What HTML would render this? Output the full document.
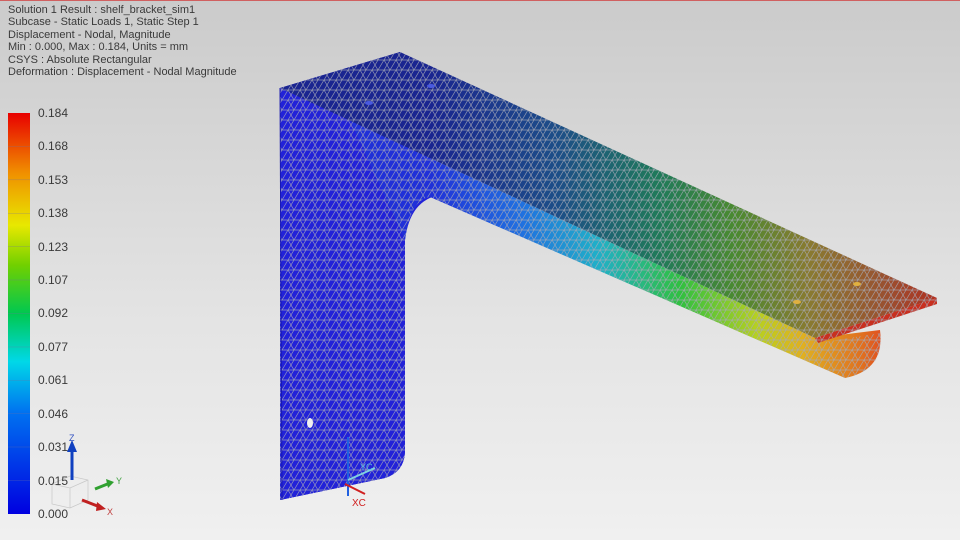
<!DOCTYPE html>
<html><head><meta charset="utf-8"><style>
html,body{margin:0;padding:0}
body{width:960px;height:540px;overflow:hidden;position:relative;background:linear-gradient(#cbcbcb,#e4e4e4 60%,#f0f0f0);font-family:"Liberation Sans",sans-serif;color:#3a3a3a}
.hdr{position:absolute;left:8px;top:4px;font-size:11px;line-height:12.4px}
.lab{position:absolute;left:38px;font-size:12px;color:#3a3a3a}
</style></head><body>
<div style="position:absolute;left:0;top:0;width:960px;height:1px;background:#d06060"></div>
<div class="hdr">Solution 1 Result : shelf_bracket_sim1<br>Subcase - Static Loads 1, Static Step 1<br>Displacement - Nodal, Magnitude<br>Min : 0.000, Max : 0.184, Units = mm<br>CSYS : Absolute Rectangular<br>Deformation : Displacement - Nodal Magnitude</div>
<svg width="960" height="540" style="position:absolute;left:0;top:0">
<defs>
<linearGradient id="leg" x1="0" y1="1" x2="0" y2="0">
<stop offset="0" stop-color="#0000e0"/><stop offset="0.25" stop-color="#0070f0"/><stop offset="0.38" stop-color="#00d8e8"/><stop offset="0.5" stop-color="#00c850"/><stop offset="0.62" stop-color="#70d000"/><stop offset="0.72" stop-color="#e8e800"/><stop offset="0.85" stop-color="#f09000"/><stop offset="1" stop-color="#e80000"/>
</linearGradient>
<linearGradient id="web" gradientUnits="userSpaceOnUse" x1="430" y1="0" x2="885" y2="0">
<stop offset="0" stop-color="#2030d8"/><stop offset="0.2" stop-color="#2070e0"/><stop offset="0.37" stop-color="#20b0c8"/><stop offset="0.55" stop-color="#30c040"/><stop offset="0.72" stop-color="#b8d020"/><stop offset="0.82" stop-color="#e0b020"/><stop offset="0.95" stop-color="#e07020"/><stop offset="1" stop-color="#e04a20"/>
</linearGradient>
<linearGradient id="top" gradientUnits="userSpaceOnUse" x1="430" y1="0" x2="937" y2="0">
<stop offset="0" stop-color="#1a2590"/><stop offset="0.25" stop-color="#1d4e88"/><stop offset="0.45" stop-color="#1f7a5a"/><stop offset="0.6" stop-color="#4a8a30"/><stop offset="0.75" stop-color="#8a7a30"/><stop offset="0.9" stop-color="#9a5030"/><stop offset="1" stop-color="#b03020"/>
</linearGradient>
<pattern id="mesh" width="12" height="10" patternUnits="userSpaceOnUse">
<path d="M0 0H12M0 10H12M0 0L6 10L12 0M0 10L6 0" stroke="#a8aab8" stroke-width="0.7" fill="none" opacity="0.85"/>
</pattern>
</defs>
<rect x="8" y="113" width="22" height="401" fill="url(#leg)"/>
<g stroke="#7070a0" stroke-width="0.5" opacity="0.5">
<path d="M8 146.4H30M8 179.8H30M8 213.3H30M8 246.7H30M8 280H30M8 313.5H30M8 347H30M8 380.3H30M8 413.7H30M8 447H30M8 480.6H30"/></g>
<path d="M280 88 L400 52 L440 195 Q410 200 405 240 L405 452 Q404 472 385 478 L280 500 Z" fill="#2222d8"/>
<path d="M280 88 L815 338 L880 330 Q885 370 845 378 L430 197 Q410 200 405 240 Z" fill="url(#web)"/>
<path d="M280 88 L350 120 L405 240 L405 452 Q404 472 385 478 L280 500 Z" fill="#2222d8"/>
<path d="M280 88 L400 52 L937 298 L815 338 Z" fill="url(#top)"/>
<path d="M815 338 L937 298 L937 304 L818 343 Z" fill="#c83020"/>
<path d="M280 88 L400 52 L937 298 L937 304 L818 343 L880 333 Q885 370 845 378 L430 197 Q410 200 405 240 L405 452 Q404 472 385 478 L280 500 Z" fill="url(#mesh)"/>
<path d="M280 88 L282 500" stroke="#1818b0" stroke-width="1"/>
<ellipse cx="431" cy="86" rx="4" ry="2" fill="#4a5ae0"/><ellipse cx="369" cy="103" rx="4" ry="2" fill="#4a5ae0"/>
<ellipse cx="857" cy="284" rx="4" ry="2" fill="#e0b040"/><ellipse cx="797" cy="302" rx="4" ry="2" fill="#e0b040"/>
<ellipse cx="310" cy="423" rx="3" ry="5" fill="#f0f0f0"/>
<path d="M348 496 V437" stroke="#2060e0" stroke-width="2"/>
<path d="M348 480 L375 468" stroke="#80d0e0" stroke-width="2"/>
<path d="M345 484 L365 494" stroke="#d02020" stroke-width="2"/>
<text x="352" y="506" font-size="10" fill="#d02020" font-family="Liberation Sans">XC</text>
<text x="360" y="470" font-size="9" fill="#60c0e0" font-family="Liberation Sans">YC</text>
<g stroke="#c8c8c8" stroke-width="0.7" fill="none">
<path d="M52 484 L70 476 L88 480 L88 500 L70 508 L52 504 Z M52 484 L70 488 L88 480 M70 488 V508"/></g>
<path d="M72 480 V448" stroke="#1040c0" stroke-width="3"/><path d="M67 452 L72 440 L77 452 Z" fill="#1040c0"/>
<path d="M95 489 L110 483" stroke="#30a030" stroke-width="3"/><path d="M106 479 L114 482 L108 488Z" fill="#30a030"/>
<path d="M82 500 L100 507" stroke="#c02020" stroke-width="3"/><path d="M97 502 L106 509 L96 511Z" fill="#c02020"/>
<text x="69" y="441" font-size="9" fill="#3050c0" font-family="Liberation Sans">Z</text>
<text x="116" y="484" font-size="9" fill="#40a040" font-family="Liberation Sans">Y</text>
<text x="107" y="515" font-size="9" fill="#c04040" font-family="Liberation Sans">X</text>
</svg>
<div class="lab" style="top:106px">0.184</div>
<div class="lab" style="top:139px">0.168</div>
<div class="lab" style="top:173px">0.153</div>
<div class="lab" style="top:206px">0.138</div>
<div class="lab" style="top:240px">0.123</div>
<div class="lab" style="top:273px">0.107</div>
<div class="lab" style="top:306px">0.092</div>
<div class="lab" style="top:340px">0.077</div>
<div class="lab" style="top:373px">0.061</div>
<div class="lab" style="top:407px">0.046</div>
<div class="lab" style="top:440px">0.031</div>
<div class="lab" style="top:474px">0.015</div>
<div class="lab" style="top:507px">0.000</div>
</body></html>
